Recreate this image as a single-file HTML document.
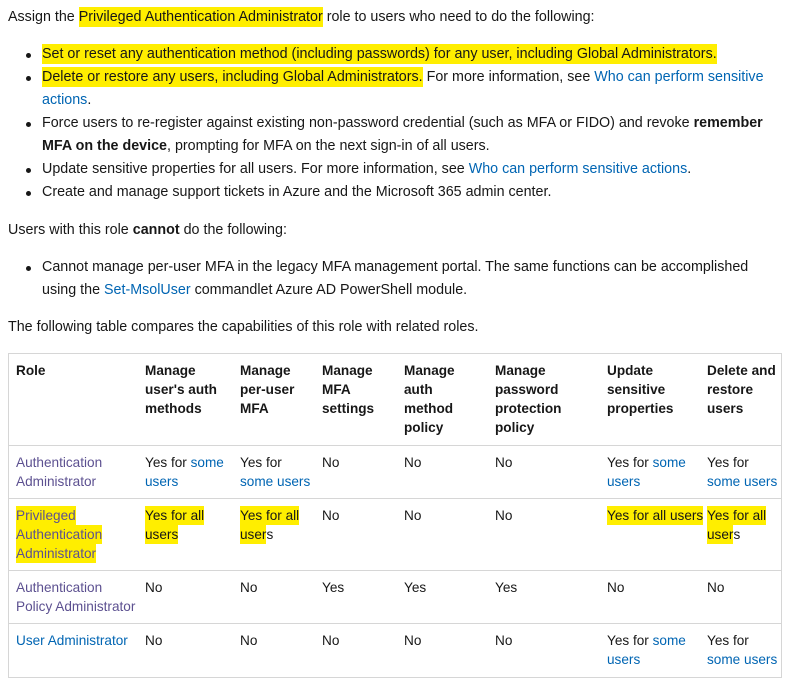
<!DOCTYPE html>
<html><head><meta charset="utf-8"><style>
body{margin:0;width:788px;height:681px;background:#fff;font-family:"Liberation Sans",sans-serif;font-size:14.3px;color:#171717;position:relative;overflow:hidden}
.l{position:absolute;white-space:nowrap;line-height:19px}
a{color:#0065b3;text-decoration:none}
.v{color:#5c5090}
.h{background:#ffee00;padding:2px 0}
.b{position:absolute;width:5px;height:5px;border-radius:50%;background:#171717}
b{font-weight:bold}
.t{position:absolute;left:8px;top:353px;width:772px;height:323px;border:1px solid #d6d6d6}
.r{position:absolute;left:8px;width:774px;height:1px;background:#d6d6d6}
.c,.hd{font-size:13.6px}
</style></head><body>
<div class="l" style="left:8px;top:8px">Assign the <span class="h">Privileged Authentication Administrator</span> role to users who need to do the following:</div>

<div class="b" style="left:26px;top:53px"></div>
<div class="l" style="left:42px;top:45px"><span class="h">Set or reset any authentication method (including passwords) for any user, including Global Administrators.</span></div>
<div class="b" style="left:26px;top:76px"></div>
<div class="l" style="left:42px;top:68px"><span class="h">Delete or restore any users, including Global Administrators.</span> For more information, see <a>Who can perform sensitive</a></div>
<div class="l" style="left:42px;top:91px"><a>actions</a>.</div>
<div class="b" style="left:26px;top:122px"></div>
<div class="l" style="left:42px;top:114px">Force users to re-register against existing non-password credential (such as MFA or FIDO) and revoke <b>remember</b></div>
<div class="l" style="left:42px;top:137px"><b>MFA on the device</b>, prompting for MFA on the next sign-in of all users.</div>
<div class="b" style="left:26px;top:168px"></div>
<div class="l" style="left:42px;top:160px">Update sensitive properties for all users. For more information, see <a>Who can perform sensitive actions</a>.</div>
<div class="b" style="left:26px;top:191px"></div>
<div class="l" style="left:42px;top:183px">Create and manage support tickets in Azure and the Microsoft 365 admin center.</div>

<div class="l" style="left:8px;top:221px">Users with this role <b>cannot</b> do the following:</div>
<div class="b" style="left:26px;top:266px"></div>
<div class="l" style="left:42px;top:258px">Cannot manage per-user MFA in the legacy MFA management portal. The same functions can be accomplished</div>
<div class="l" style="left:42px;top:281px">using the <a>Set-MsolUser</a> commandlet Azure AD PowerShell module.</div>
<div class="l" style="left:8px;top:318px">The following table compares the capabilities of this role with related roles.</div>

<div class="t"></div>
<div class="r" style="top:445px"></div>
<div class="r" style="top:498px"></div>
<div class="r" style="top:570px"></div>
<div class="r" style="top:623px"></div>

<div class="hd" style="font-weight:bold">
<div class="l" style="left:16px;top:361px">Role</div>
<div class="l" style="left:145px;top:361px">Manage<br>user's auth<br>methods</div>
<div class="l" style="left:240px;top:361px">Manage<br>per-user<br>MFA</div>
<div class="l" style="left:322px;top:361px">Manage<br>MFA<br>settings</div>
<div class="l" style="left:404px;top:361px">Manage<br>auth<br>method<br>policy</div>
<div class="l" style="left:495px;top:361px">Manage<br>password<br>protection<br>policy</div>
<div class="l" style="left:607px;top:361px">Update<br>sensitive<br>properties</div>
<div class="l" style="left:707px;top:361px">Delete and<br>restore<br>users</div>
</div>
<div class="c">
<div class="l v" style="left:16px;top:453px">Authentication<br>Administrator</div>
<div class="l" style="left:145px;top:453px">Yes for <a>some</a><br><a>users</a></div>
<div class="l" style="left:240px;top:453px">Yes for<br><a>some users</a></div>
<div class="l" style="left:322px;top:453px">No</div>
<div class="l" style="left:404px;top:453px">No</div>
<div class="l" style="left:495px;top:453px">No</div>
<div class="l" style="left:607px;top:453px">Yes for <a>some</a><br><a>users</a></div>
<div class="l" style="left:707px;top:453px">Yes for<br><a>some users</a></div>

<div class="l v" style="left:16px;top:506px"><span class="h">Privileged</span><br><span class="h">Authentication</span><br><span class="h">Administrator</span></div>
<div class="l" style="left:145px;top:506px"><span class="h">Yes for all</span><br><span class="h">users</span></div>
<div class="l" style="left:240px;top:506px"><span class="h">Yes for all</span><br><span class="h">user</span>s</div>
<div class="l" style="left:322px;top:506px">No</div>
<div class="l" style="left:404px;top:506px">No</div>
<div class="l" style="left:495px;top:506px">No</div>
<div class="l" style="left:607px;top:506px"><span class="h">Yes for all users</span></div>
<div class="l" style="left:707px;top:506px"><span class="h">Yes for all</span><br><span class="h">user</span>s</div>

<div class="l v" style="left:16px;top:578px">Authentication<br>Policy Administrator</div>
<div class="l" style="left:145px;top:578px">No</div>
<div class="l" style="left:240px;top:578px">No</div>
<div class="l" style="left:322px;top:578px">Yes</div>
<div class="l" style="left:404px;top:578px">Yes</div>
<div class="l" style="left:495px;top:578px">Yes</div>
<div class="l" style="left:607px;top:578px">No</div>
<div class="l" style="left:707px;top:578px">No</div>

<div class="l" style="left:16px;top:631px"><a>User Administrator</a></div>
<div class="l" style="left:145px;top:631px">No</div>
<div class="l" style="left:240px;top:631px">No</div>
<div class="l" style="left:322px;top:631px">No</div>
<div class="l" style="left:404px;top:631px">No</div>
<div class="l" style="left:495px;top:631px">No</div>
<div class="l" style="left:607px;top:631px">Yes for <a>some</a><br><a>users</a></div>
<div class="l" style="left:707px;top:631px">Yes for<br><a>some users</a></div>
</div>
</body></html>
